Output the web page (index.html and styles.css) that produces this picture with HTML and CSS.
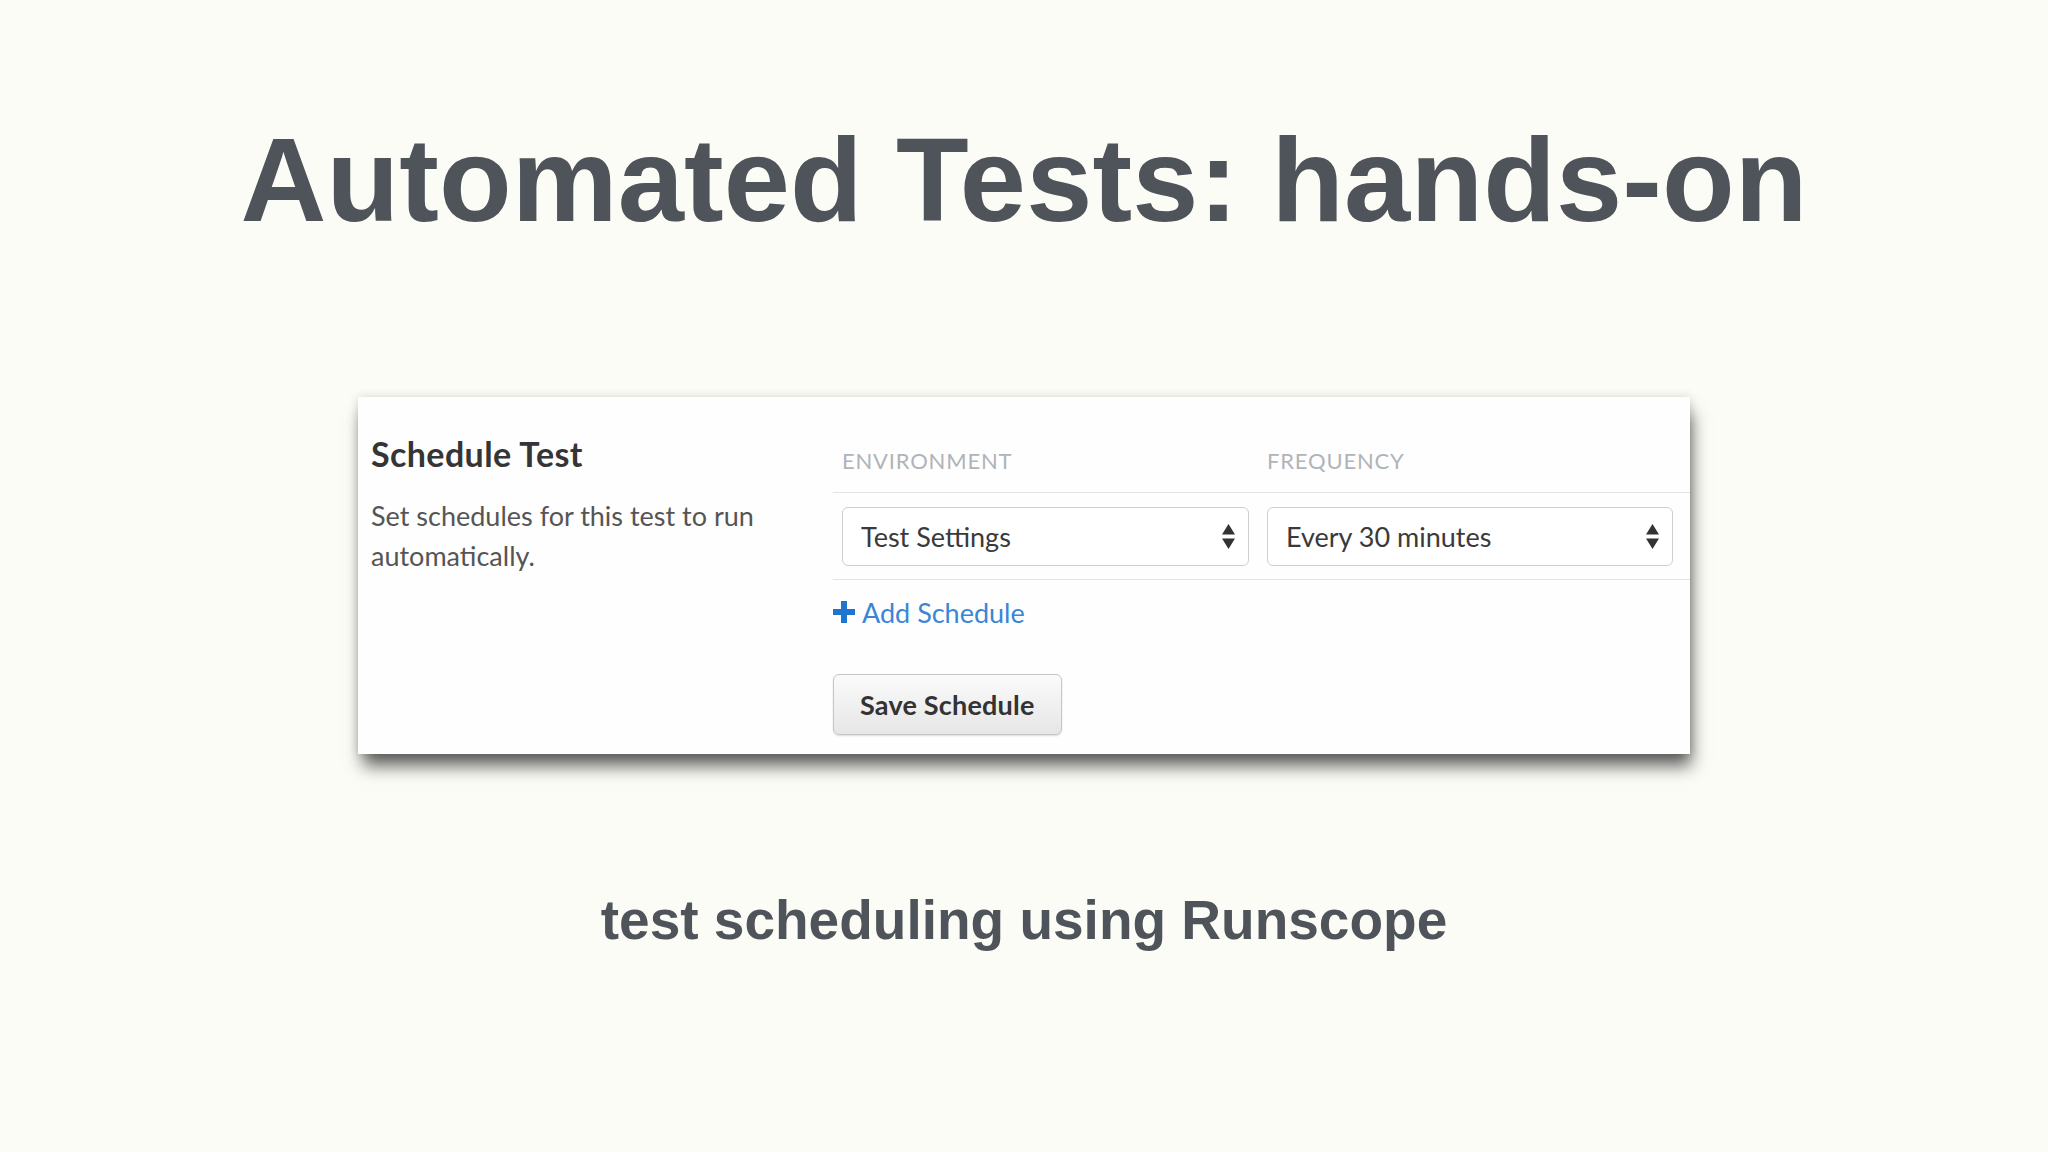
FILE: index.html
```html
<!DOCTYPE html>
<html lang="en">
<head>
<meta charset="utf-8">
<title>Automated Tests: hands-on</title>
<link rel="stylesheet" href="styles.css">
</head>
<body>
<main class="slide">
  <h1 class="title">Automated Tests: hands-on</h1>
  <section class="card">
    <div class="intro">
      <h2 class="intro-title">Schedule Test</h2>
      <p class="intro-text">Set schedules for this test to run automatically.</p>
    </div>
    <div class="sched">
      <div class="sched-head">
        <span class="col-label">ENVIRONMENT</span>
        <span class="col-label">FREQUENCY</span>
      </div>
      <div class="sched-row">
        <div class="select">
          <span class="select-value">Test Settings</span>
          <svg class="select-arrows" width="13" height="25" viewBox="0 0 13 25"><path d="M6.5 0 L13 10.5 L0 10.5 Z M0 14.5 L13 14.5 L6.5 25 Z" fill="#333"/></svg>
        </div>
        <div class="select">
          <span class="select-value">Every 30 minutes</span>
          <svg class="select-arrows" width="13" height="25" viewBox="0 0 13 25"><path d="M6.5 0 L13 10.5 L0 10.5 Z M0 14.5 L13 14.5 L6.5 25 Z" fill="#333"/></svg>
        </div>
      </div>
      <a class="add-link" href="#">
        <svg class="add-icon" width="22" height="22" viewBox="0 0 22 22"><path d="M8 0 H14 V8 H22 V14 H14 V22 H8 V14 H0 V8 H8 Z" fill="#1f74cf"/></svg>
        <span>Add Schedule</span>
      </a>
      <button class="save-btn" type="button">Save Schedule</button>
    </div>
  </section>
  <p class="caption">test scheduling using Runscope</p>
</main>
</body>
</html>
```

FILE: styles.css
```css
html, body {
  margin: 0;
  padding: 0;
}

body {
  background: #fcfcf7;
  width: 2048px;
  height: 1152px;
  overflow: hidden;
}

.slide {
  display: flex;
  flex-direction: column;
  align-items: center;
  padding-top: 121px;
}

.title {
  margin: 0;
  font-family: "Liberation Sans", Arial, sans-serif;
  font-weight: 700;
  font-size: 119px;
  line-height: 118px;
  color: #4f535a;
  letter-spacing: 0.1px;
}

.card {
  margin-top: 158px;
  width: 1332px;
  height: 357px;
  box-sizing: border-box;
  background: #fefefe;
  display: flex;
  box-shadow: 3px 14px 16px -2px rgba(0, 0, 0, 0.62), 0 0 9px rgba(0, 0, 0, 0.14);
  font-family: Lato, "Source Sans Pro", "Open Sans", sans-serif;
}

.intro {
  width: 475px;
  box-sizing: border-box;
  padding: 37px 0 0 13px;
}

.intro-title {
  margin: 0;
  font-size: 34px;
  line-height: 40px;
  font-weight: 700;
  letter-spacing: 0.4px;
  color: #353535;
}

.intro-text {
  margin: 22px 0 0;
  max-width: 420px;
  font-size: 27px;
  line-height: 40px;
  color: #555;
}

.sched {
  flex: 1;
  display: flex;
  flex-direction: column;
  align-items: flex-start;
}

.sched-head,
.sched-row {
  align-self: stretch;
  display: grid;
  grid-template-columns: 407px 406px;
  column-gap: 18px;
  padding-left: 9px;
  border-bottom: 1px solid #e4e4e4;
}

.sched-head {
  padding-top: 50px;
  padding-bottom: 17px;
}

.col-label {
  font-size: 22px;
  line-height: 28px;
  letter-spacing: 0.8px;
  color: #b0b4b8;
}

.sched-row {
  padding-top: 14px;
  padding-bottom: 13px;
}

.select {
  height: 59px;
  box-sizing: border-box;
  border: 1px solid #cfcfcf;
  border-radius: 6px;
  background: #fff;
  display: flex;
  align-items: center;
  justify-content: space-between;
  padding: 0 13px 0 18px;
}

.select-value {
  font-size: 27px;
  line-height: 32px;
  color: #3a3a3a;
}

.select-arrows {
  display: block;
}

.add-link {
  margin-top: 17px;
  display: flex;
  align-items: center;
  gap: 7px;
  text-decoration: none;
  font-size: 27px;
  line-height: 32px;
  color: #3a86d6;
}

.add-icon {
  display: block;
  margin-top: -3px;
}

.save-btn {
  margin-top: 45px;
  height: 61px;
  padding: 0 26px;
  border: 1px solid #c6c6c6;
  border-radius: 6px;
  background: linear-gradient(#fbfbfb, #e6e6e6);
  box-shadow: 0 1px 2px rgba(0, 0, 0, 0.14);
  font-family: Lato, "Source Sans Pro", "Open Sans", sans-serif;
  font-size: 27px;
  line-height: 32px;
  font-weight: 700;
  letter-spacing: 0.2px;
  color: #333;
}

.caption {
  margin: 139px 0 0;
  font-family: "Liberation Sans", Arial, sans-serif;
  font-weight: 700;
  font-size: 55px;
  line-height: 55px;
  color: #4f535a;
}
```
